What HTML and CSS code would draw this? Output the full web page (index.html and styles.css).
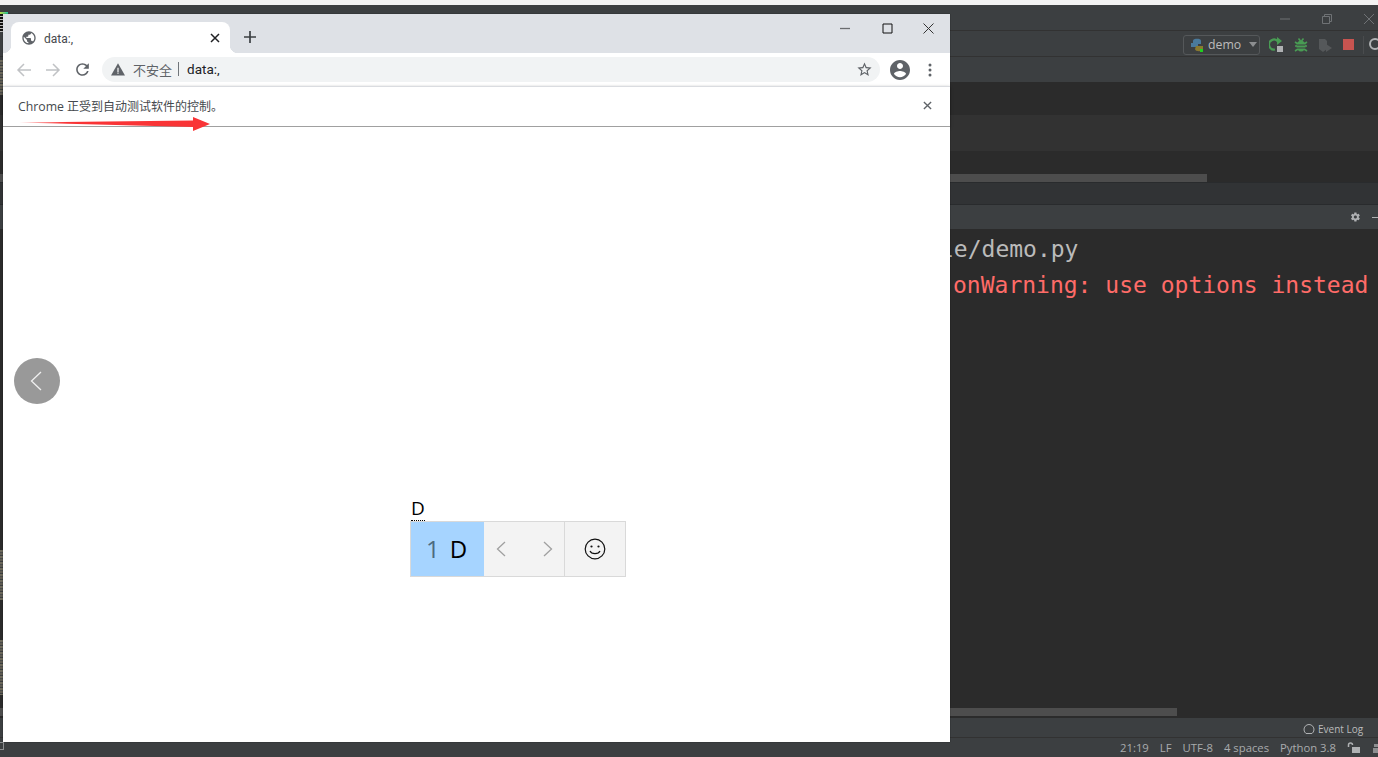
FILE: index.html
```html
<!DOCTYPE html>
<html lang="zh-CN">
<head>
<meta charset="utf-8">
<title>data:,</title>
<link rel="stylesheet" href="styles.css">
</head>
<body>
<div class="topstrip"></div>
<div class="ide">
  <div class="ide-title">
    <svg class="wc" viewBox="0 0 12 12" width="12" height="12"><path d="M1 6h10" stroke="#6f7275" fill="none"/></svg>
    <svg class="wc" viewBox="0 0 12 12" width="12" height="12"><path d="M1.5 3.500h7v7h-7zM3.500 3.500v-2h7v7h-2" stroke="#6f7275" fill="none"/></svg>
    <svg class="wc" viewBox="0 0 12 12" width="12" height="12"><path d="M1 1l10 10M11 1L1 11" stroke="#6f7275" fill="none"/></svg>
  </div>
  <div class="ide-toolbar">
    <div class="runconfig">
      <svg viewBox="0 0 14 16" width="14" height="16"><path d="M3 7V3.500C3 1 11 1 11 3.500V7z" fill="#4a7a9c"/><path d="M1 6h7v4H1z" fill="#4a7a9c"/><path d="M6 9h7v3c0 3-8 3-8 0z" fill="#8a7a30"/><rect x="10" y="12" width="3" height="3" fill="#20d020"/></svg>
      <span>demo</span>
      <i class="caret"></i>
    </div>
    <svg class="tool-rerun" viewBox="0 0 16 16" width="16" height="16"><path d="M8 3.500a5 5 0 1 0-3 8" stroke="#499c54" stroke-width="2.200" fill="none" transform="translate(1 1)"/><path d="M8 0l5 4-5 4z" fill="#499c54"/><rect x="8" y="9" width="6" height="6" fill="#afb1b3"/></svg>
    <svg class="tool" viewBox="0 0 16 16" width="16" height="16"><ellipse cx="8" cy="9" rx="4.500" ry="5.500" fill="#499c54"/><path d="M2 5l3 2M14 5l-3 2M2 9h3M14 9h-3M2 14l3-2M14 14l-3-2M5.500 1.500l2 2.500M10.500 1.500L8.500 4" stroke="#499c54" stroke-width="1.600"/><path d="M4 8h8M4 11h8" stroke="#3c3f41"/></svg>
    <svg class="tool" viewBox="0 0 16 16" width="16" height="16"><path d="M2 2h6l2 2v8l-4 3-4-3z" fill="#55585a"/><path d="M9 7l6 4-6 4z" fill="#55585a"/></svg>
    <span class="stop"></span>
    <span class="sep"></span>
    <svg class="tool-search" viewBox="0 0 16 16" width="16" height="16"><circle cx="7" cy="7" r="5" stroke="#afb1b3" stroke-width="2" fill="none"/></svg>
  </div>
  <div class="ide-nav"></div>
  <div class="editor">
    <div class="ed-line"></div>
    <div class="ed-caret"></div>
    <div class="ed-line2"></div>
    <div class="scrollbar top-scroll"><b></b></div>
  </div>
  <div class="tab-gap"></div>
  <div class="tool-head">
    <svg class="gear" viewBox="0 0 24 24" width="14" height="14"><path fill="#afb1b3" d="M19.430 12.980c.04-.32.07-.64.07-.98s-.03-.66-.07-.98l2.110-1.650c.19-.15.24-.42.12-.64l-2-3.460c-.12-.22-.39-.3-.61-.22l-2.490 1c-.52-.4-1.080-.73-1.690-.98l-.38-2.650C14.460 2.180 14.250 2 14 2h-4c-.25 0-.46.18-.49.420l-.38 2.650c-.61.25-1.170.59-1.690.98l-2.490-1c-.23-.09-.49 0-.61.22l-2 3.460c-.13.22-.07.49.12.64l2.110 1.650c-.04.32-.07.65-.07.98s.03.66.07.98l-2.110 1.650c-.19.15-.24.42-.12.64l2 3.460c.12.22.39.3.61.22l2.490-1c.52.4 1.080.73 1.690.98l.38 2.650c.03.24.24.42.49.42h4c.25 0 .46-.18.49-.42l.38-2.650c.61-.25 1.170-.59 1.690-.98l2.490 1c.23.09.49 0 .61-.22l2-3.460c.12-.22.07-.49-.12-.64l-2.110-1.650zM12 15.500c-1.930 0-3.500-1.570-3.500-3.500s1.570-3.500 3.500-3.500 3.500 1.570 3.500 3.500-1.570 3.500-3.500 3.500z"/></svg>
    <span class="dash"></span>
  </div>
  <div class="console">
    <div class="con-line con-path">le/demo.py</div>
    <div class="con-line con-err">onWarning: use options instead</div>
    <div class="con-fill"></div>
    <div class="scrollbar bottom-scroll"><b></b></div>
  </div>
  <div class="eventbar">
    <svg viewBox="0 0 12 12" width="12" height="12"><path d="M3 10.500A5 5 0 1 1 9 10.500z" stroke="#afb1b3" fill="none"/></svg>
    <span>Event Log</span>
  </div>
  <div class="statusbar">
    <span>21:19</span><span>LF</span><span>UTF-8</span><span>4 spaces</span><span>Python 3.8</span>
    <svg viewBox="0 0 14 12" width="14" height="12"><path d="M1.500 5V3a2 2 0 0 1 4 0" stroke="#afb1b3" stroke-width="1.500" fill="none"/><path d="M5 5h8v6H5z" fill="#afb1b3"/></svg>
    <svg viewBox="0 0 12 12" width="12" height="12"><path d="M2 2h7v3H2zM1 6h9v5H1z" fill="#8c8e90"/></svg>
  </div>
  <div class="side-a"></div>
  <div class="side-b"></div>
  <div class="side-c"></div>
  <div class="side-top"></div>
  <div class="side-mark"></div>
  <div class="corner"></div>
</div>

<section class="chrome">
  <div class="tabstrip">
    <div class="tab">
      <svg class="favicon" viewBox="0 0 24 24" width="16" height="16"><path fill="#5f6368" d="M12 2C6.480 2 2 6.480 2 12s4.480 10 10 10 10-4.480 10-10S17.520 2 12 2zm-1 17.930c-3.950-.49-7-3.850-7-7.930 0-.62.08-1.210.21-1.790L9 15v1c0 1.100.9 2 2 2v1.930zm6.900-2.540c-.26-.81-1-1.390-1.900-1.390h-1v-3c0-.55-.45-1-1-1H8v-2h2c.55 0 1-.45 1-1V7h2c1.100 0 2-.9 2-2v-.41c2.930 1.190 5 4.060 5 7.410 0 2.080-.8 3.970-2.100 5.390z"/></svg>
      <span class="tab-title">data:,</span>
      <svg class="tab-close" viewBox="0 0 10 10" width="10" height="10"><path d="M1 1l8 8M9 1L1 9" stroke="#202124" stroke-width="1.500" fill="none"/></svg>
    </div>
    <svg class="newtab" viewBox="0 0 12 12" width="12" height="12"><path d="M6 0v12M0 6h12" stroke="#3c4043" stroke-width="1.700" fill="none"/></svg>
    <div class="winctl">
      <svg viewBox="0 0 11 11" width="11" height="11"><path d="M0 5.500h10" stroke="#6b6d70" stroke-width="1.300" fill="none"/></svg>
      <svg viewBox="0 0 11 11" width="11" height="11"><path d="M1 1h9v9H1z" stroke="#111" fill="none"/></svg>
      <svg viewBox="0 0 11 11" width="11" height="11"><path d="M.5.500l10 10M10.500.500l-10 10" stroke="#333" fill="none"/></svg>
    </div>
  </div>
  <div class="toolbar">
    <svg class="nav" viewBox="0 0 16 16" width="16" height="16"><path d="M15 8H2M8 2L2 8l6 6" stroke="#c0c2c5" stroke-width="1.500" fill="none"/></svg>
    <svg class="nav" viewBox="0 0 16 16" width="16" height="16"><path d="M1 8h13M8 2l6 6-6 6" stroke="#c0c2c5" stroke-width="1.500" fill="none"/></svg>
    <svg class="nav" viewBox="0 0 24 24" width="19" height="19"><path fill="#5f6368" d="M17.650 6.350C16.200 4.900 14.210 4 12 4c-4.420 0-7.990 3.580-7.990 8s3.570 8 7.990 8c3.730 0 6.840-2.550 7.730-6h-2.080c-.82 2.330-3.040 4-5.650 4-3.310 0-6-2.690-6-6s2.690-6 6-6c1.660 0 3.140.69 4.220 1.780L13 11h7V4l-2.350 2.350z"/></svg>
    <div class="omnibox">
      <svg class="warn" viewBox="0 0 24 24" width="14" height="14"><path fill="#5f6368" d="M0 23h24L12 2z"/><path fill="#fff" d="M11 10h2v7h-2zM11 18h2v2h-2z"/></svg>
      <span class="insecure">不安全</span>
      <i class="pipe"></i>
      <span class="url">data:,</span>
      <svg class="star" viewBox="0 0 24 24" width="17" height="17"><path fill="#5f6368" d="M22 9.240l-7.190-.62L12 2 9.190 8.630 2 9.240l5.460 4.730L5.820 21 12 17.270 18.180 21l-1.630-7.030L22 9.240zM12 15.400l-3.760 2.270 1-4.280-3.320-2.880 4.380-.38L12 6.100l1.710 4.040 4.380.38-3.320 2.880 1 4.280L12 15.400z"/></svg>
    </div>
    <svg class="avatar" viewBox="2 2 20 20" width="20" height="20"><path fill="#5f6368" d="M12 2C6.480 2 2 6.480 2 12s4.480 10 10 10 10-4.480 10-10S17.520 2 12 2zm0 3c1.660 0 3 1.340 3 3s-1.340 3-3 3-3-1.340-3-3 1.340-3 3-3zm0 14.200c-2.500 0-4.710-1.280-6-3.220.03-1.990 4-3.080 6-3.080 1.990 0 5.970 1.090 6 3.080-1.290 1.940-3.500 3.220-6 3.220z"/></svg>
    <svg class="dots" viewBox="0 0 4 14" width="4" height="14"><circle cx="2" cy="2" r="1.500" fill="#5f6368"/><circle cx="2" cy="7" r="1.500" fill="#5f6368"/><circle cx="2" cy="12" r="1.500" fill="#5f6368"/></svg>
  </div>
  <div class="infobar">
    <span><span class="info-latin">Chrome</span> 正受到自动测试软件的控制。</span>
    <svg viewBox="0 0 10 10" width="9" height="9"><path d="M1 1l8 8M9 1L1 9" stroke="#5f6368" stroke-width="1.500" fill="none"/></svg>
  </div>
  <div class="content"></div>

  <svg class="red-arrow" viewBox="0 0 196 16" width="196" height="16"><defs><linearGradient id="tail" x1="0" x2="1" y1="0" y2="0"><stop offset="0" stop-color="#ffb0b0"/><stop offset=".25" stop-color="#f93436"/></linearGradient></defs><path fill="url(#tail)" d="M1 5.500L175 3.500V0L192 7 175 14V10z"/></svg>
  <button class="back-btn" type="button" aria-label="back"><svg viewBox="0 0 12 20" width="12" height="20"><path d="M11 1L1.500 10l9.500 9" stroke="#f0f0f0" stroke-width="1.300" fill="none"/></svg></button>
  <div class="ime">
    <span class="ime-comp">D</span>
    <div class="ime-bar">
      <div class="ime-cand"><span class="cand-num">1</span><span class="cand-text">D</span></div>
      <div class="ime-pager">
        <svg viewBox="0 0 10 16" width="10" height="16"><path d="M9 1L1.500 8 9 15" stroke="#a0a0a0" stroke-width="1.300" fill="none"/></svg>
        <svg viewBox="0 0 10 16" width="10" height="16"><path d="M1 1l7.500 7L1 15" stroke="#a0a0a0" stroke-width="1.300" fill="none"/></svg>
      </div>
      <div class="ime-emoji"><svg viewBox="0 0 22 22" width="22" height="22"><circle cx="11" cy="11" r="9.800" stroke="#111" stroke-width="1.200" fill="none"/><circle cx="7.500" cy="8.500" r="1.100" fill="#111"/><circle cx="14.500" cy="8.500" r="1.100" fill="#111"/><path d="M6 13c1.500 3.500 8.500 3.500 10 0" stroke="#111" stroke-width="1.200" fill="none"/></svg></div>
    </div>
  </div>
</section>
</body>
</html>
```
FILE: styles.css
```css
* { box-sizing: border-box; }
html, body { margin: 0; padding: 0; }
body { position: relative; width: 1378px; height: 757px; overflow: hidden; background: #f2f2f2; font-family: "Open Sans", "Noto Sans", sans-serif; }

.topstrip { height: 5px; background: #f3f3f3; }

.ide { position: relative; height: 752px; display: flex; flex-direction: column; background: #3c3f41; color: #afb1b3; overflow: hidden; }
.ide-title { height: 26px; display: flex; align-items: center; padding: 2px 0 0 1279px; gap: 30px; border-bottom: 1px solid #323232; flex: none; }
.ide-toolbar { height: 26px; display: flex; align-items: center; padding: 2px 0 0 1183px; border-bottom: 1px solid #323232; flex: none; }
.runconfig { width: 77px; height: 20px; flex: none; display: flex; align-items: center; gap: 4px; padding-left: 6px; border: 1px solid #55585a; border-radius: 3px; font-size: 12.300px; color: #bbb; }
.caret { width: 0; height: 0; margin-left: 4px; border: 4.500px solid transparent; border-top: 5px solid #8c8e90; border-bottom: 0; }
.tool-rerun { flex: none; margin-left: 9px; }
.tool { flex: none; margin-left: 8px; }
.stop { flex: none; width: 11px; height: 11px; margin-left: 10px; background: #c75450; }
.sep { flex: none; width: 1px; height: 18px; margin-left: 9px; background: #4a4c4e; }
.tool-search { flex: none; margin-left: 4px; }
.ide-nav { height: 25px; flex: none; background: #3c3f41; }

.editor { height: 100px; flex: none; display: flex; flex-direction: column; background: #2b2b2b; }
.ed-line { height: 33px; }
.ed-caret { height: 36px; background: #323232; }
.ed-line2 { height: 23px; }
.scrollbar { height: 8px; flex: none; }
.scrollbar b { display: block; height: 100%; background: #4d4d4d; }
.top-scroll b { width: 1207px; }
.bottom-scroll b { width: 1177px; }

.tab-gap { height: 23px; flex: none; background: #313335; border-top: 1px solid #292b2d; border-bottom: 1px solid #292b2d; }
.tool-head { height: 24px; flex: none; display: flex; align-items: center; padding-left: 1350px; background: #3c3f41; }
.dash { width: 8px; height: 1px; margin-left: 11px; background: #afb1b3; }

.console { height: 489px; flex: none; display: flex; flex-direction: column; background: #2b2b2b; padding-top: 2px; }
.con-line { height: 36px; flex: none; font-family: "DejaVu Sans Mono", monospace; font-size: 23px; line-height: 36px; white-space: nowrap; }
.con-path { padding-left: 940px; color: #bbbbbb; }
.con-err { padding-left: 953px; color: #ff6b68; }
.con-fill { flex: 1; }
.bottom-scroll { margin-bottom: 2px; }

.eventbar { height: 20px; flex: none; display: flex; align-items: center; gap: 3px; padding: 3px 0 0 1303px; border-bottom: 1px solid #323232; font-size: 10px; color: #bbb; }
.statusbar { height: 19px; flex: none; display: flex; align-items: center; gap: 11px; padding-left: 1120px; font-size: 11.300px; color: #a9abad; white-space: nowrap; }
.statusbar svg { flex: none; }

.side-a, .side-b, .side-c, .side-top { position: absolute; left: 0; width: 3px; background: repeating-linear-gradient(180deg, #6e6a5c 0 2px, #4a4c4c 2px 3px, #5f5c52 3px 5px, #3c3f41 5px 6px); }
.side-a { top: 55px; height: 35px; }
.side-b { top: 545px; height: 50px; }
.side-c { top: 635px; height: 55px; }
.side-top { top: 9px; height: 18px; background: repeating-linear-gradient(180deg, #111 0 2px, #bbb 2px 3px); }
.side-mark { position: absolute; left: 0; top: 7px; width: 8px; height: 2px; background: linear-gradient(90deg, #b8d840, #20c8a0); }
.corner { position: absolute; left: -2px; top: 737px; width: 6px; height: 8px; border: 1px solid #8c8e90; }

.chrome { position: absolute; left: 3px; top: 14px; width: 947px; height: 728px; display: flex; flex-direction: column; background: #fff; box-shadow: 0 0 1px rgba(0,0,0,.6); }
.tabstrip { height: 39px; flex: none; display: flex; align-items: flex-end; padding-left: 8px; background: #dee1e6; }
.tab { position: relative; width: 219px; height: 31px; display: flex; align-items: center; padding: 0 10px 0 10px; background: #fff; border-radius: 8px 8px 0 0; }
.tab::before, .tab::after { content: ""; position: absolute; bottom: 0; width: 8px; height: 8px; background: #fff; }
.tab::before { left: -8px; -webkit-mask: radial-gradient(circle at 0 0, transparent 8px, #000 8.500px); mask: radial-gradient(circle at 0 0, transparent 8px, #000 8.500px); }
.tab::after { right: -8px; -webkit-mask: radial-gradient(circle at 100% 0, transparent 8px, #000 8.500px); mask: radial-gradient(circle at 100% 0, transparent 8px, #000 8.500px); }
.favicon { flex: none; }
.tab-title { flex: 1; margin-left: 7px; padding-top: 2px; font-family: "Roboto", "Open Sans", sans-serif; font-size: 12px; color: #45494d; }
.newtab { flex: none; margin: 0 0 10px 14px; }
.winctl { display: flex; align-self: flex-start; gap: 30.500px; margin: 9px 0 0 auto; padding-right: 16px; }

.toolbar { height: 33px; flex: none; display: flex; align-items: center; padding-left: 13px; background: #fff; }
.nav { flex: none; margin-right: 13px; }
.nav:nth-child(2) { margin-right: 12px; }
.nav:nth-child(3) { margin-right: 10px; }
.omnibox { width: 778px; height: 25px; flex: none; display: flex; align-items: center; padding: 0 0 1px 9px; border-radius: 13px; background: #f1f3f4; }
.warn { flex: none; }
.insecure { margin-left: 8px; font-family: "Noto Sans CJK SC", sans-serif; font-size: 13px; color: #5f6368; }
.pipe { width: 1px; height: 14px; margin-left: 6px; background: #70757a; }
.url { flex: 1; margin-left: 8px; font-family: "Roboto", "Open Sans", sans-serif; font-size: 13.500px; color: #202124; }
.star { flex: none; margin-right: 7px; }
.avatar { flex: none; margin-left: 10px; }
.dots { flex: none; margin-left: 18px; }

.infobar { height: 41px; flex: none; display: flex; align-items: center; justify-content: space-between; padding: 0 18px 2px 15px; border-top: 1px solid #dadce0; border-bottom: 1px solid #a0a0a0; box-shadow: 0 1px 3px rgba(0,0,0,.35); font-family: "Roboto", "Noto Sans CJK SC", sans-serif; font-size: 12px; color: #45494d; }
.info-latin { font-family: "Open Sans", sans-serif; font-size: 12.300px; }
.content { flex: 1; background: #fff; }

.red-arrow { position: absolute; left: 15px; top: 103px; }
.back-btn { position: absolute; left: 11px; top: 344px; width: 46px; height: 46px; display: flex; align-items: center; justify-content: center; padding: 0 3px 0 0; border: 0; border-radius: 50%; background: #999; }

.ime { position: absolute; left: 407px; top: 484px; width: 216px; }
.ime-comp { display: block; width: 14px; height: 23px; margin-left: 1px; border-bottom: 1px dotted #000; font-family: "Open Sans", sans-serif; font-size: 19px; line-height: 21px; color: #000; }
.ime-bar { height: 56px; display: flex; border: 1px solid #d9d9d9; background: #f3f3f3; }
.ime-cand { width: 73px; display: flex; align-items: center; gap: 10px; padding: 0 0 2px 15px; background: #a6d4ff; font-family: "Open Sans", sans-serif; font-size: 24px; }
.cand-num { color: #4c6a80; }
.cand-text { color: #000; }
.ime-pager { width: 81px; display: flex; align-items: center; justify-content: space-between; padding: 0 11px 0 12px; border-right: 1px solid #d9d9d9; }
.ime-emoji { flex: 1; display: flex; align-items: center; justify-content: center; }
```
